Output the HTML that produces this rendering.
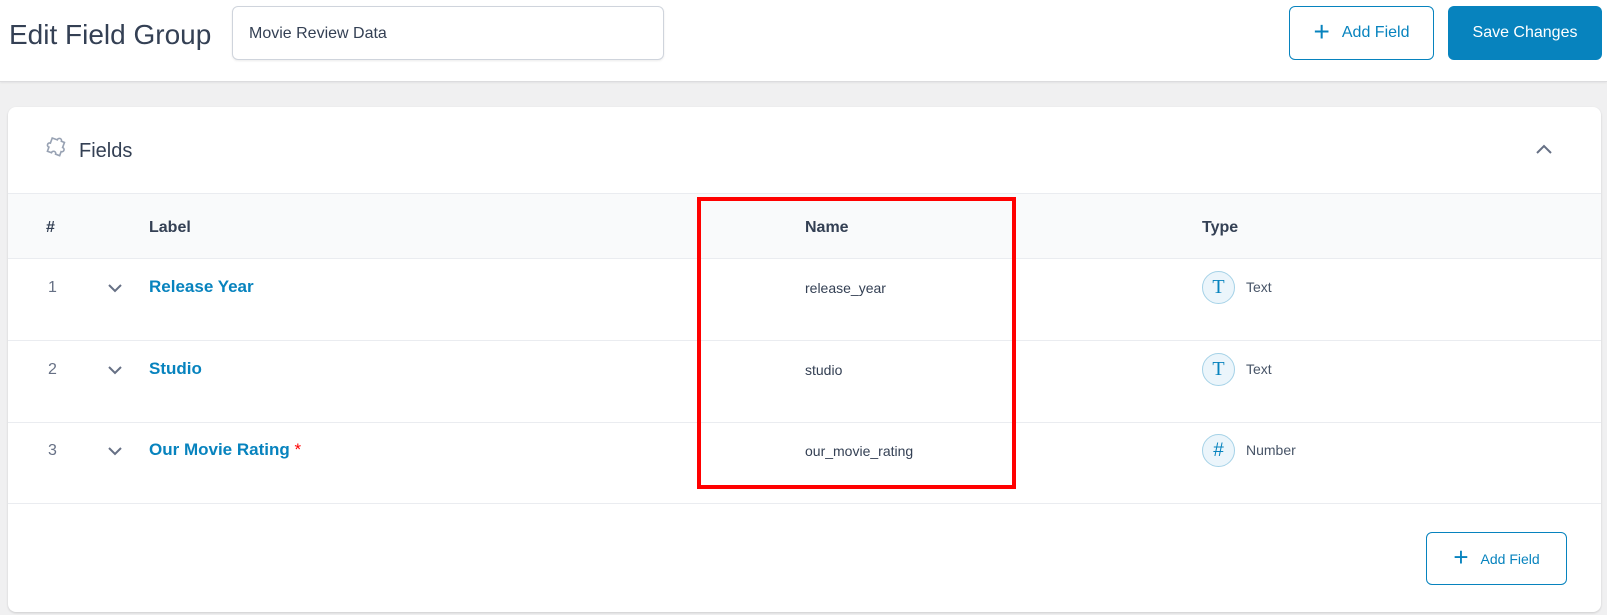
<!DOCTYPE html>
<html><head><style>
*{box-sizing:border-box;margin:0;padding:0}
body{width:1607px;height:615px;background:#f0f0f1;font-family:"Liberation Sans",sans-serif;position:relative;overflow:hidden;color:#1d2327}
.hdr{position:absolute;left:0;top:0;width:1607px;height:82px;background:#fff;border-bottom:1px solid #dcdcde;box-shadow:0 1px 2px rgba(0,0,0,.06)}
.title{position:absolute;left:9px;top:19px;font-size:28px;color:#344054}
.inp{position:absolute;left:232px;top:6px;width:432px;height:54px;border:1px solid #cfd4dc;border-radius:6px;box-shadow:0 1px 2px rgba(0,0,0,.08);font-size:16px;color:#344054;padding:18px 16px}
.btn{position:absolute;border-radius:6px;font-size:16px;display:flex;align-items:center;justify-content:center}
.ob{border:1px solid #0783be;color:#0783be;background:#fff}
.card{position:absolute;left:8px;top:107px;width:1593px;height:505px;background:#fff;border-radius:8px;box-shadow:0 1px 2px rgba(0,0,0,.15);overflow:hidden}
.th{position:absolute;left:0;top:86px;width:100%;height:66px;background:#f9fafb;border-top:1px solid #eaecf0;border-bottom:1px solid #eaecf0}
.row{position:absolute;left:0;width:100%;height:82px;border-bottom:1px solid #eaecf0}
.t{position:absolute;font-size:16px}
.hd{font-weight:bold;color:#344054;font-size:16px}
.num{color:#667085}
.lbl{color:#0783be;font-weight:bold;font-size:17px}
.nm{font-size:14px;color:#344054}
.ic{position:absolute;left:1194px;width:33px;height:33px;border-radius:50%;background:#ebf5fb;border:1px solid #a5d2e7;color:#0783be;font-family:"Liberation Serif",serif;font-size:20px;text-align:center;line-height:31px}
.ty{position:absolute;left:1238px;font-size:14px;color:#475467}
</style></head><body>
<div class="hdr">
<div class="title">Edit Field Group</div>
<div class="inp">Movie Review Data</div>
<div class="btn ob" style="left:1289px;top:6px;width:145px;height:54px"><span style="font-size:28px;font-weight:300;margin-right:12px;margin-top:-3px">+</span>Add Field</div>
<div class="btn" style="left:1448px;top:6px;width:154px;height:54px;background:#0783be;color:#fff">Save Changes</div>
</div>
<div class="card">
<svg style="position:absolute;left:33px;top:29px" width="26" height="26" viewBox="0 0 24 24" fill="none" stroke="#98a2b3" stroke-width="1.5"><path d="M9 3h3a2 2 0 1 1 4 0h3v5a2 2 0 1 1 0 4v4h-4a2 2 0 1 0-4 0H7v-4a2 2 0 1 1 0-4V3z" transform="rotate(20 12 12)"/></svg>
<div class="t" style="left:71px;top:33px;font-size:20px;color:#344054">Fields</div>
<svg style="position:absolute;left:1527px;top:36px" width="18" height="12" viewBox="0 0 18 12"><path d="M2 10l7-7 7 7" fill="none" stroke="#667085" stroke-width="2"/></svg>
<div class="th">
<div class="t hd" style="left:38px;top:25px">#</div>
<div class="t hd" style="left:141px;top:25px">Label</div>
<div class="t hd" style="left:797px;top:25px">Name</div>
<div class="t hd" style="left:1194px;top:25px">Type</div>
</div>
<div class="row" style="top:152px">
<div class="t num" style="left:40px;top:20px">1</div>
<svg style="position:absolute;left:100px;top:25px" width="14" height="9" viewBox="0 0 14 9"><path d="M1 1l6 6 6-6" fill="none" stroke="#667085" stroke-width="2"/></svg>
<div class="t lbl" style="left:141px;top:18px">Release Year</div>
<div class="t nm" style="left:797px;top:21px">release_year</div>
<div class="ic" style="top:12px">T</div><div class="ty" style="top:20px">Text</div>
</div>
<div class="row" style="top:234px">
<div class="t num" style="left:40px;top:20px">2</div>
<svg style="position:absolute;left:100px;top:25px" width="14" height="9" viewBox="0 0 14 9"><path d="M1 1l6 6 6-6" fill="none" stroke="#667085" stroke-width="2"/></svg>
<div class="t lbl" style="left:141px;top:18px">Studio</div>
<div class="t nm" style="left:797px;top:21px">studio</div>
<div class="ic" style="top:12px">T</div><div class="ty" style="top:20px">Text</div>
</div>
<div class="row" style="top:315px">
<div class="t num" style="left:40px;top:20px">3</div>
<svg style="position:absolute;left:100px;top:25px" width="14" height="9" viewBox="0 0 14 9"><path d="M1 1l6 6 6-6" fill="none" stroke="#667085" stroke-width="2"/></svg>
<div class="t lbl" style="left:141px;top:18px">Our Movie Rating <span style="color:#f00;font-weight:normal">*</span></div>
<div class="t nm" style="left:797px;top:21px">our_movie_rating</div>
<div class="ic" style="top:12px;font-family:'Liberation Sans',sans-serif;font-size:19px">#</div><div class="ty" style="top:20px">Number</div>
</div>
<div class="btn ob" style="left:1418px;top:425px;width:141px;height:53px;font-size:14px"><span style="font-size:26px;font-weight:300;margin-right:12px;margin-top:-3px">+</span>Add Field</div>
</div>
<div style="position:absolute;left:697px;top:197px;width:319px;height:292px;border:4px solid #f00"></div>
</body></html>
